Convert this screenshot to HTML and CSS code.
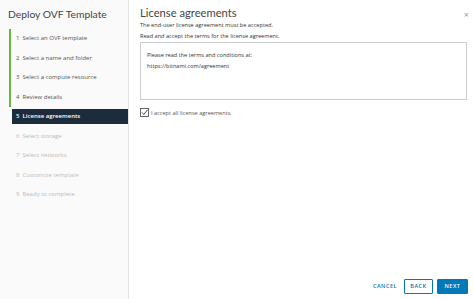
FILE: index.html
```html
<!DOCTYPE html>
<html>
<head>
<meta charset="utf-8">
<link rel="stylesheet" href="styles.css">
</head>
<body>
<div class="dialog">
  <aside class="side">
    <h1 class="title">Deploy OVF Template</h1>
    <ol class="steps">
      <li class="step done">1 &nbsp;Select an OVF template</li>
      <li class="step done">2 &nbsp;Select a name and folder</li>
      <li class="step done">3 &nbsp;Select a compute resource</li>
      <li class="step done">4 &nbsp;Review details</li>
      <li class="step active">5 &nbsp;License agreements</li>
      <li class="step todo">6 &nbsp;Select storage</li>
      <li class="step todo">7 &nbsp;Select networks</li>
      <li class="step todo">8 &nbsp;Customize template</li>
      <li class="step todo">9 &nbsp;Ready to complete</li>
    </ol>
  </aside>
  <main class="main">
    <div class="head">
      <h2 class="heading">License agreements</h2>
      <span class="close">×</span>
    </div>
    <p class="line">The end-user license agreement must be accepted.</p>
    <p class="line">Read and accept the terms for the license agreement.</p>
    <div class="box">
      <p class="boxline">Please read the terms and conditions at:</p>
      <p class="boxline">https://bitnami.com/agreement</p>
    </div>
    <label class="accept">
      <span class="check"><svg width="9" height="9" viewBox="0 0 9 9"><rect x="0.5" y="0.5" width="8" height="8" fill="#fff" stroke="#666"/><path d="M2 4.5 L3.8 6.5 L7.5 1.8" fill="none" stroke="#444" stroke-width="1"/></svg></span>
      I accept all license agreements.
    </label>
    <div class="spacer"></div>
    <div class="footer">
      <span class="btn link">CANCEL</span>
      <span class="btn outline">BACK</span>
      <span class="btn primary">NEXT</span>
    </div>
  </main>
</div>
</body>
</html>
```
FILE: styles.css
```css
* { box-sizing: border-box; }
html, body { margin: 0; padding: 0; }
body {
  width: 474px;
  height: 299px;
  background: #fff;
  font-family: "Open Sans", "Liberation Sans", sans-serif;
  color: #333;
  overflow: hidden;
}
.dialog {
  display: flex;
  height: 299px;
}
.side {
  width: 129px;
  background: #fafafa;
  border-right: 1px solid #e4e4e4;
  padding-top: 6px;
}
.title {
  margin: 0 0 0 8px;
  font-family: Lato, "Open Sans", sans-serif;
  font-weight: 400;
  font-size: 10.3px;
  line-height: 16px;
  color: #444;
}
.steps {
  list-style: none;
  margin: 7px 0 0 0;
  padding: 0 0 0 9px;
}
.step {
  font-size: 6px;
  line-height: 19.5px;
  height: 19.5px;
  padding-left: 7px;
  white-space: nowrap;
}
.step.done {
  border-left: 2px solid #6db33f;
  padding-left: 5px;
  color: #555;
}
.step.active {
  background: #1c2c3c;
  color: #fff;
  font-weight: 600;
  margin-left: 3px;
  margin-top: 2px;
  margin-bottom: 2.5px;
  height: 15px;
  line-height: 15px;
  padding-left: 4px;
}
.step.todo {
  color: #bbb;
}
.main {
  flex: 1;
  padding: 4px 7px 5px 11px;
  display: flex;
  flex-direction: column;
}
.head {
  display: flex;
  justify-content: space-between;
  align-items: flex-start;
}
.heading {
  margin: 0;
  font-family: Lato, "Open Sans", sans-serif;
  font-weight: 400;
  font-size: 11.2px;
  line-height: 16px;
  color: #444;
  padding-top: 1px;
  height: 16px;
}
.close {
  font-size: 9px;
  color: #999;
  line-height: 10px;
  margin-top: 6px;
  margin-right: -2px;
}
.line {
  margin: 0;
  font-size: 5.6px;
  line-height: 11px;
  color: #333;
}
.box {
  margin-top: 0px;
  height: 58px;
  border: 1px solid #ccc;
  padding: 7px 6px;
}
.boxline {
  margin: 0;
  font-size: 5.6px;
  line-height: 10.5px;
  color: #333;
}
.accept {
  display: flex;
  align-items: center;
  gap: 2px;
  margin-top: 8px;
  font-size: 5.6px;
  color: #555;
}
.check { display: flex; }
.spacer { flex: 1; }
.footer {
  display: flex;
  justify-content: flex-end;
  align-items: center;
  gap: 4px;
  margin-right: -1px;
}
.btn {
  font-size: 5.5px;
  font-weight: 600;
  letter-spacing: 0.5px;
  height: 15px;
  line-height: 13px;
  text-align: center;
  border: 1px solid transparent;
  border-radius: 1px;
}
.btn.link { color: #0079b8; width: 30px; }
.btn.outline { color: #0079b8; border-color: #0079b8; width: 29px; }
.btn.primary { color: #fff; background: #0079b8; border-color: #0079b8; width: 31px; }
```
